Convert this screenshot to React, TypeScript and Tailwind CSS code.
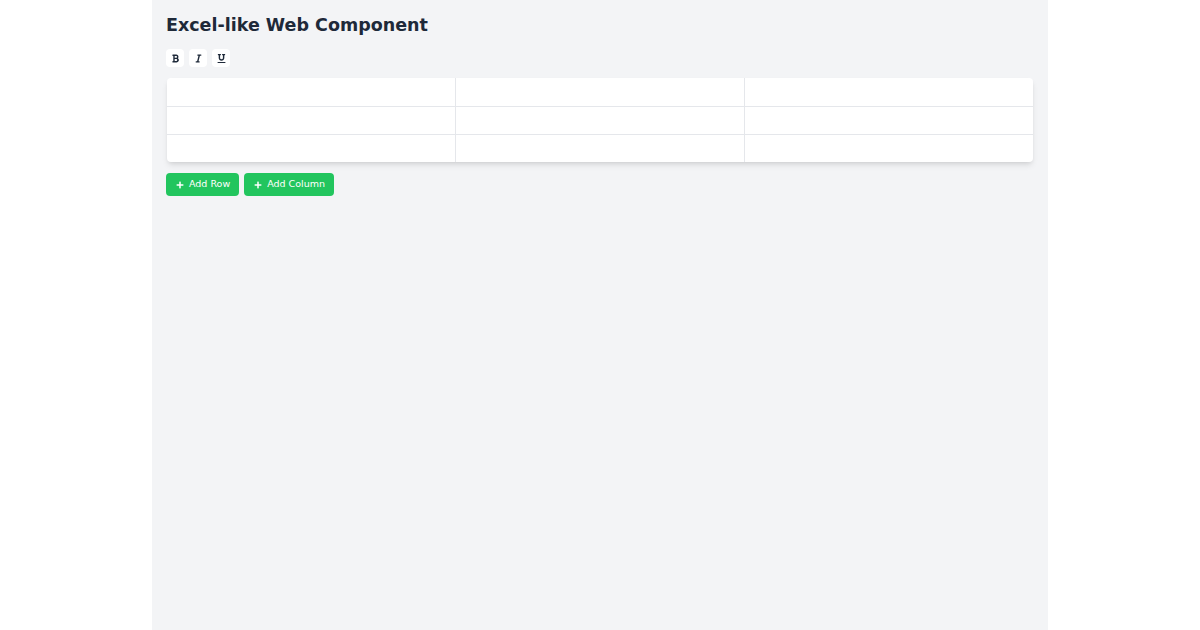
import { FaBold, FaItalic, FaUnderline, FaPlus } from 'react-icons/fa'

const rows = 3
const cols = 3

export default function App() {
  return (
    <div className="min-h-[630px] bg-white font-['DejaVu_Sans',sans-serif]">
      <div className="mx-auto min-h-[630px] max-w-4xl bg-gray-100 px-3.5 pt-[13px] pb-3">
        <h1 className="text-[17.5px] font-bold leading-6 text-gray-800">Excel-like Web Component</h1>

        {/* Formatting toolbar */}
        <div className="mt-3 flex gap-[5px]">
          {[FaBold, FaItalic, FaUnderline].map((Icon, i) => (
            <button
              key={i}
              className="flex h-[18px] w-[18px] items-center justify-center rounded-sm bg-white text-gray-800"
            >
              <Icon className="h-[9px] w-[9px]" />
            </button>
          ))}
        </div>

        {/* Grid */}
        <div className="mx-px mt-[11px] overflow-hidden rounded-sm bg-white shadow-md">
          <table className="w-full table-fixed border-collapse">
            <tbody>
              {Array.from({ length: rows }).map((_, r) => (
                <tr key={r} className="border-b border-gray-200 last:border-b-0">
                  {Array.from({ length: cols }).map((_, c) => (
                    <td key={c} className="h-7 border-r border-gray-200 last:border-r-0" />
                  ))}
                </tr>
              ))}
            </tbody>
          </table>
        </div>

        <div className="mt-[11px] flex gap-[5px]">
          <button className="flex h-[23px] items-center gap-[5px] rounded-sm bg-[#22c55e] pl-2.5 pr-[9px] text-[9.5px] text-white">
            <FaPlus className="h-2 w-2" />
            Add Row
          </button>
          <button className="flex h-[23px] items-center gap-[5px] rounded-sm bg-[#22c55e] pl-2.5 pr-[9px] text-[9.5px] text-white">
            <FaPlus className="h-2 w-2" />
            Add Column
          </button>
        </div>
      </div>
    </div>
  )
}
